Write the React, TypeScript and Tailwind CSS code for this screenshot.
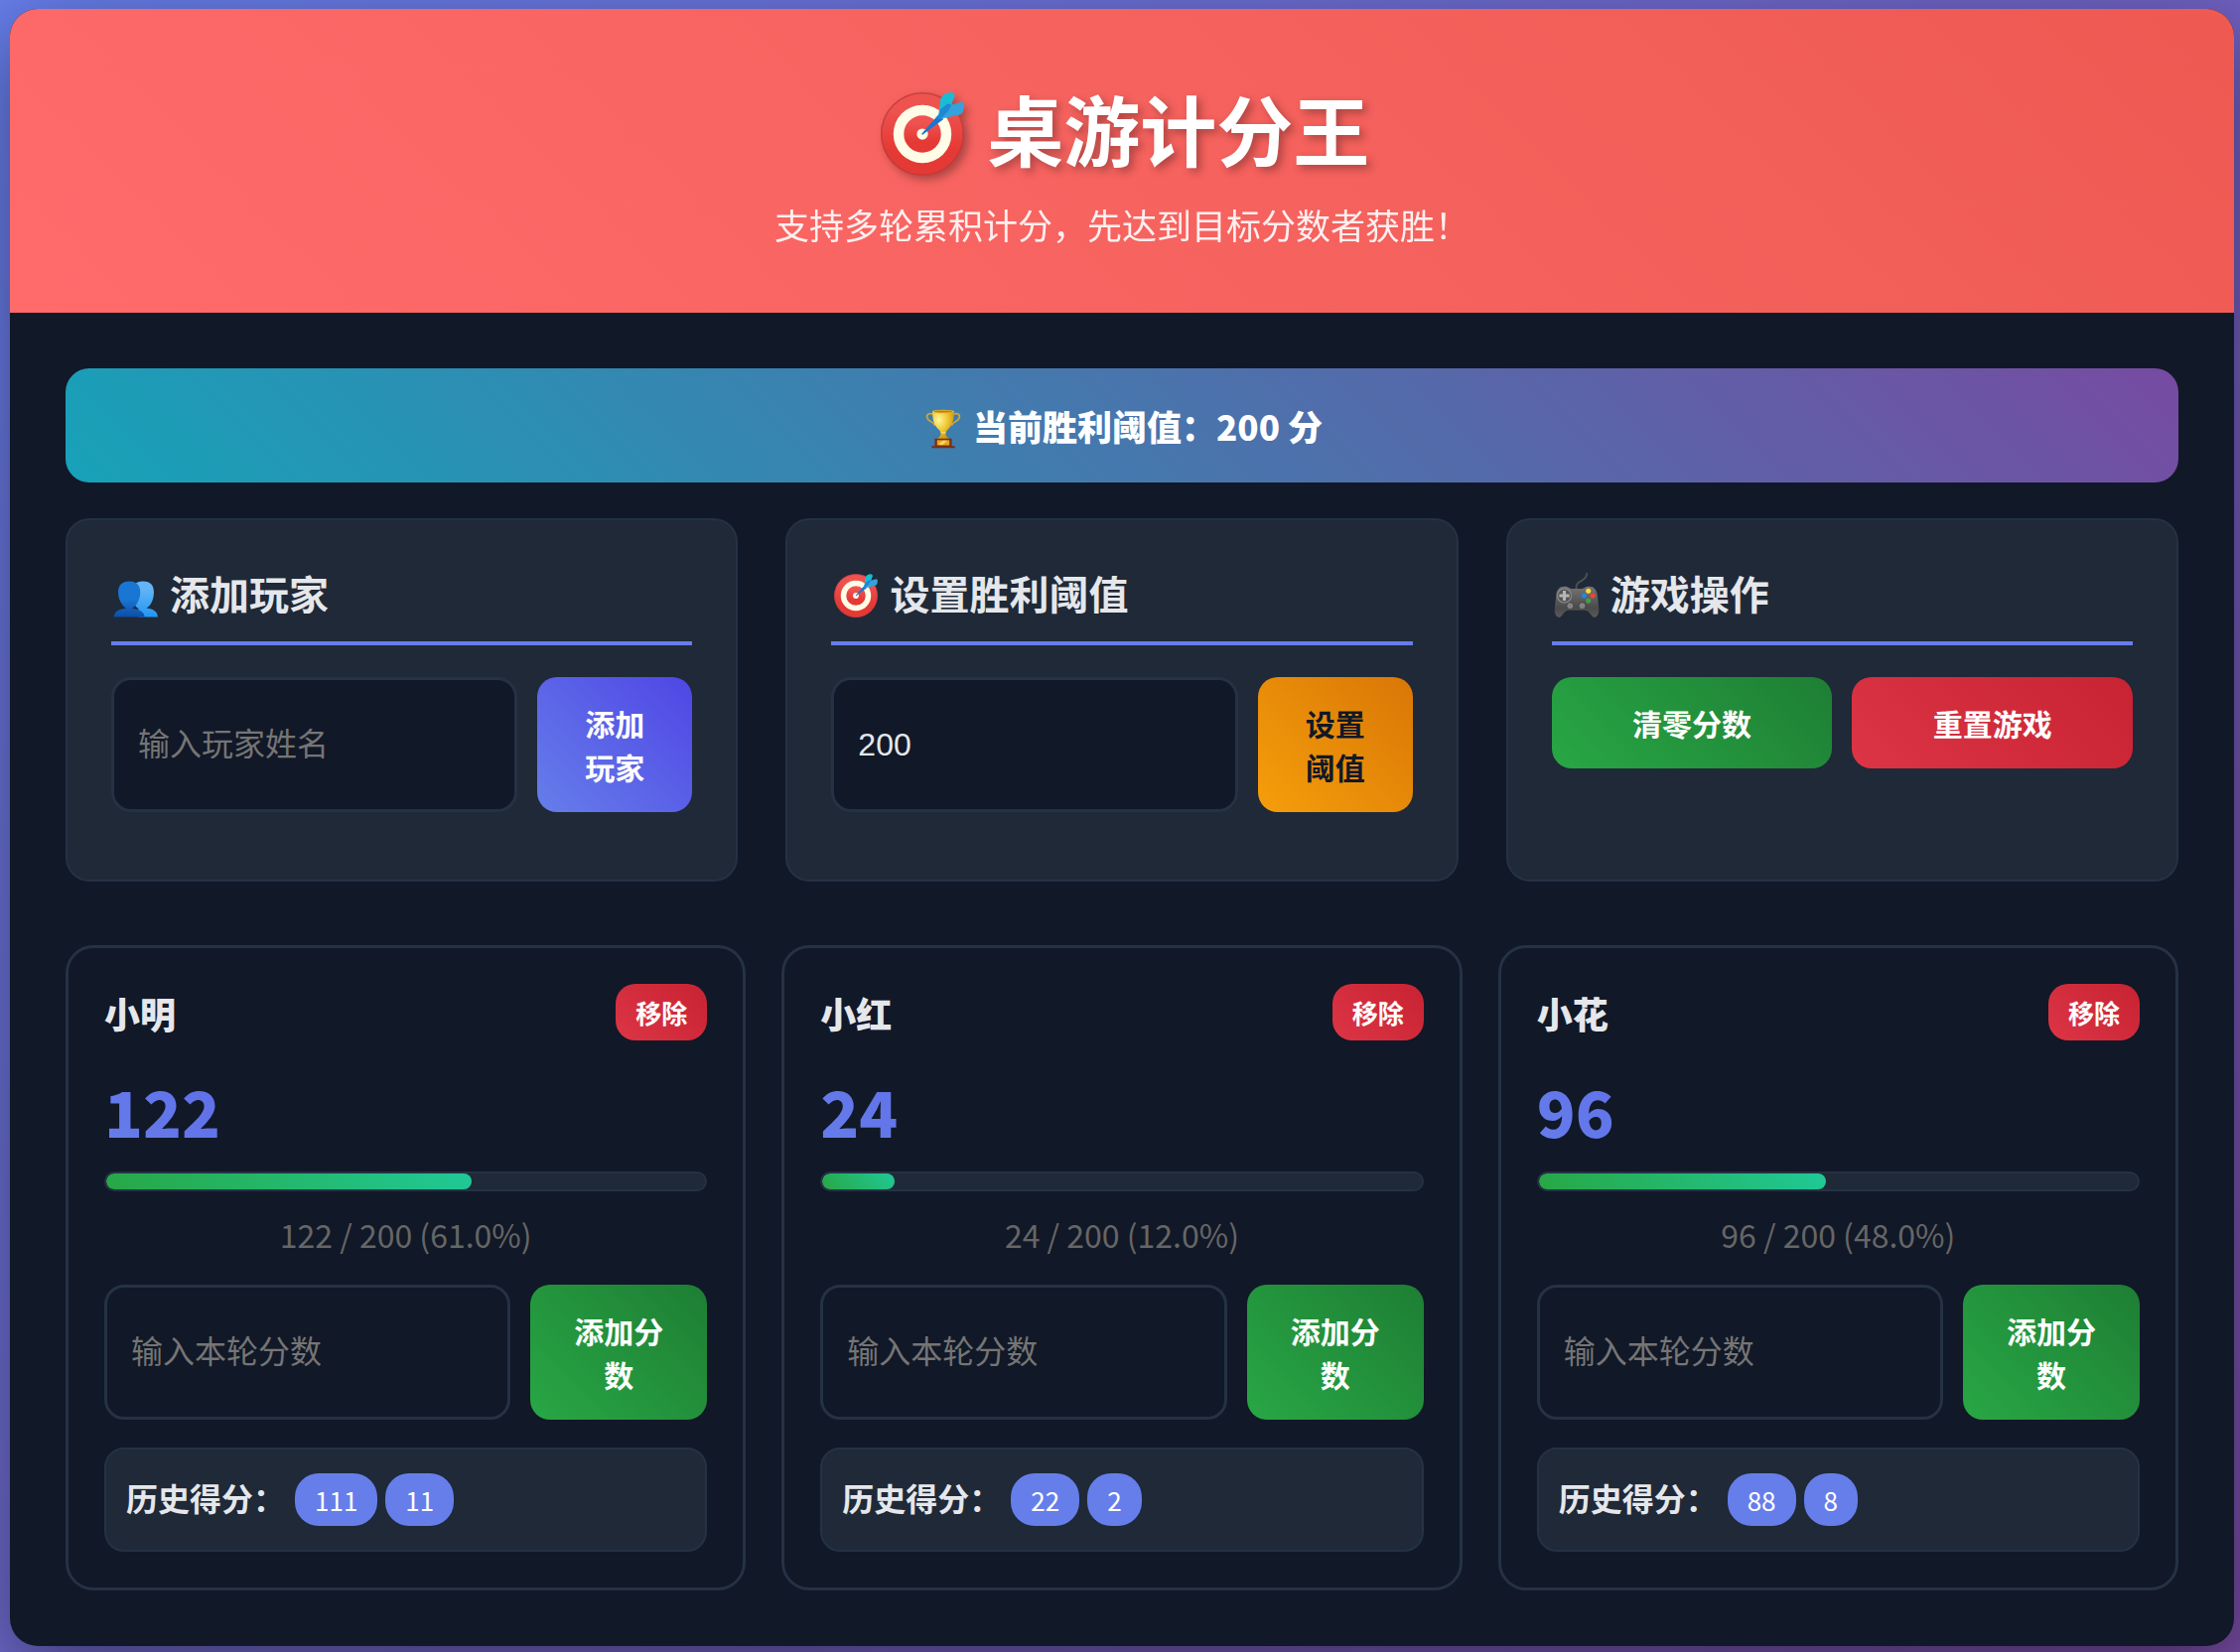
import { useState } from 'react';

interface Player {
  id: number;
  name: string;
  scores: number[];
}

const initialPlayers: Player[] = [
  { id: 1, name: '小明', scores: [111, 11] },
  { id: 2, name: '小红', scores: [22, 2] },
  { id: 3, name: '小花', scores: [88, 8] },
];

const sum = (scores: number[]) => scores.reduce((a, b) => a + b, 0);

const inputClass =
  'min-w-0 flex-1 rounded-[20px] border-3 border-[#243244] bg-[#111827] px-6 text-[32px] text-[#e5e7eb] placeholder:text-[#757575] outline-none font-["Liberation_Sans","Noto_Sans_CJK_SC",sans-serif]';

const buttonClass = 'rounded-[20px] px-10 py-6 text-[30px] leading-[44px] font-bold cursor-pointer';

const greenGradient = 'bg-[linear-gradient(45deg,#28a745,#1e7e34)] text-white';
const redGradient = 'bg-[linear-gradient(45deg,#dc3545,#c82333)] text-white';

const panelIconClass = 'inline-block size-[50px] align-[-11px]';

interface IconProps {
  className: string;
}

const TargetIcon = ({ className }: IconProps) => (
  <svg viewBox="0 0 128 128" className={className} aria-hidden="true">
    <defs>
      <linearGradient id="target-red" x1="0" y1="0" x2="0" y2="1">
        <stop offset="0.2" stopColor="#ef5350" />
        <stop offset="0.7" stopColor="#e53935" />
      </linearGradient>
    </defs>
    <circle cx="64" cy="64" r="56" fill="url(#target-red)" />
    <circle cx="64" cy="64" r="55" fill="none" stroke="#b73a38" strokeWidth="2" opacity="0.7" />
    <circle cx="64" cy="64" r="39" fill="#fffde7" />
    <circle cx="64" cy="64" r="25" fill="url(#target-red)" />
    <circle cx="64" cy="64" r="7.5" fill="#fffde7" />
    <path d="M64 64 86 39 91 44Z" fill="#1976d2" stroke="#1976d2" strokeWidth="2" strokeLinejoin="round" />
    <path d="M85 43 88 19Q90 11 97 9L103 8Q108 9 107 14L102 27 91 43Z" fill="#1abcd5" />
    <path d="M87 44 102 25 116 21Q120 21 120 25L119 33Q117 38 110 39Z" fill="#35a2dc" />
    <path d="M84 45 88 31 97 24Q103 22 102 27L98 34 88 44Z" fill="#1e88d2" />
  </svg>
);

const TrophyIcon = ({ className }: IconProps) => (
  <svg viewBox="0 0 128 128" className={className} aria-hidden="true">
    <defs>
      <radialGradient id="trophy-cup" cx="0.3" cy="0.3" r="0.8">
        <stop offset="0" stopColor="#fff59d" />
        <stop offset="0.5" stopColor="#f0c832" />
        <stop offset="1" stopColor="#c98a0c" />
      </radialGradient>
    </defs>
    <path
      d="M36 22C20 14 13 24 18 34 22 43 35 42 39 53M92 22C108 14 115 24 110 34 106 43 93 42 89 53"
      fill="none"
      stroke="#c9a53a"
      strokeWidth="5"
      strokeLinecap="round"
    />
    <path
      d="M32 13C33 37 37 53 49 64 57 71 58 77 56 83 54 88 49 90 47 93H81C79 90 74 88 72 83 70 77 71 71 79 64 91 53 95 37 96 13Z"
      fill="url(#trophy-cup)"
    />
    <ellipse cx="64" cy="13" rx="32" ry="5" fill="#e8bd35" />
    <ellipse cx="64" cy="13" rx="27" ry="3" fill="#b98218" />
    <ellipse cx="64" cy="75" rx="8" ry="3" fill="#f5d75a" />
    <path d="M39 92H89V114H98V120H30V114H39Z" fill="#7b2e14" />
    <path d="M46 97H82V112H46Z" fill="#e0ab25" />
    <path d="M50 109 63 98H75L62 111Z" fill="#ffe97a" opacity="0.7" />
  </svg>
);

const PlayersIcon = ({ className }: IconProps) => (
  <svg viewBox="0 0 128 128" className={className} aria-hidden="true">
    <defs>
      <linearGradient id="players-back" x1="0" y1="0" x2="0" y2="1">
        <stop offset="0.2" stopColor="#64b5f6" />
        <stop offset="1" stopColor="#2196f3" />
      </linearGradient>
      <linearGradient id="players-front" x1="0" y1="0" x2="0" y2="1">
        <stop offset="0.5" stopColor="#1976d2" />
        <stop offset="1" stopColor="#0d4da6" />
      </linearGradient>
    </defs>
    <path
      d="M82 27C102 27 110 38 110 55 110 75 101 91 91 96 109 98 120 106 120 119H70V97C58 90 54 75 54 55 54 38 62 27 82 27Z"
      fill="url(#players-back)"
    />
    <path
      d="M47 27C66 27 75 38 75 55 75 77 63 91 54 97 74 98 86 107 86 119H7C7 106 18 98 39 97 30 91 18 77 18 55 18 38 27 27 47 27Z"
      fill="url(#players-front)"
    />
  </svg>
);

const GamepadIcon = ({ className }: IconProps) => (
  <svg viewBox="0 0 128 128" className={className} aria-hidden="true">
    <defs>
      <linearGradient id="pad-body" x1="0" y1="0" x2="0" y2="1">
        <stop offset="0" stopColor="#757575" />
        <stop offset="0.7" stopColor="#4a4a4a" />
        <stop offset="1" stopColor="#5a5a5a" />
      </linearGradient>
    </defs>
    <path d="M63 46C59 22 90 30 90 7" fill="none" stroke="#4b524f" strokeWidth="5" strokeLinecap="round" />
    <path
      d="M32 40C43 40 45 46 53 46H75C83 46 85 40 96 40 109 40 115 49 117 60L121 98C122 110 117 119 110 120 100 120 99 102 83 102H45C29 102 28 120 18 120 11 119 6 110 7 98L11 60C13 49 19 40 32 40Z"
      fill="url(#pad-body)"
    />
    <circle cx="32" cy="64" r="18" fill="#555555" stroke="#8a8a8a" strokeWidth="3" />
    <path d="M28 51H36V60H45V68H36V77H28V68H19V60H28Z" fill="#b5b5b5" />
    <circle cx="94" cy="52" r="6.5" fill="#fdd835" />
    <circle cx="83" cy="64" r="6.5" fill="#1e88e5" />
    <circle cx="105" cy="64" r="6.5" fill="#f44336" />
    <circle cx="94" cy="77" r="6.5" fill="#43a047" />
    <circle cx="47" cy="90" r="9" fill="#828282" stroke="#3a3a3a" strokeWidth="2" />
    <circle cx="78" cy="90" r="9" fill="#828282" stroke="#3a3a3a" strokeWidth="2" />
  </svg>
);

interface PanelProps {
  icon: React.ReactNode;
  title: string;
  children: React.ReactNode;
}

const Panel = ({ icon, title, children }: PanelProps) => (
  <section className="rounded-3xl border-2 border-[#243244] bg-[#1f2937] p-11 pb-17">
    <h2 className="mb-8 border-b-4 border-[#667eea] pb-5 text-[40px] leading-[58px] font-bold">
      {icon} {title}
    </h2>
    {children}
  </section>
);

interface PlayerCardProps {
  player: Player;
  threshold: number;
  onAdd: (id: number, score: number) => void;
  onRemove: (id: number) => void;
}

const PlayerCard = ({ player, threshold, onAdd, onRemove }: PlayerCardProps) => {
  const [value, setValue] = useState('');
  const total = sum(player.scores);
  const percent = Math.min((total / threshold) * 100, 100);

  const handleSubmit = (e: React.FormEvent) => {
    e.preventDefault();
    if (value === '' || Number.isNaN(Number(value))) return;
    onAdd(player.id, Number(value));
    setValue('');
  };

  return (
    <article className="rounded-[28px] border-3 border-[#243244] bg-[#111827] p-9">
      <div className="mb-6 flex items-center justify-between">
        <h3 className="text-4xl leading-[52px] font-black">{player.name}</h3>
        <button
          type="button"
          onClick={() => onRemove(player.id)}
          className={`rounded-[20px] px-5 py-2.5 text-[26px] leading-[37px] font-bold cursor-pointer ${redGradient}`}
        >
          移除
        </button>
      </div>

      <div className="mb-4 bg-[linear-gradient(45deg,#667eea,#4f46e5)] bg-clip-text text-[64px] leading-[92px] font-black text-transparent">
        {total}
      </div>

      <div className="h-5 overflow-hidden rounded-[10px] border-2 border-[#243244] bg-[#1f2937]">
        <div
          className="h-full rounded-[10px] bg-[linear-gradient(45deg,#28a745,#20c997)]"
          style={{ width: `${percent}%` }}
        />
      </div>
      <p className="mt-5 mb-7 text-center text-[32px] leading-[46px] text-[#666666]">
        {total} / {threshold} ({percent.toFixed(1)}%)
      </p>

      <form onSubmit={handleSubmit} className="mb-7 flex gap-5">
        <input
          type="text"
          inputMode="numeric"
          aria-label={`${player.name} 本轮分数`}
          placeholder="输入本轮分数"
          value={value}
          onChange={(e) => setValue(e.target.value)}
          className={inputClass}
        />
        <button type="submit" className={`w-[178px] ${buttonClass} ${greenGradient}`}>
          添加分数
        </button>
      </form>

      <div className="flex flex-wrap items-baseline rounded-[20px] border-2 border-[#243244] bg-[#1f2937] p-5">
        <strong className="mr-1.5 text-[32px] leading-[46px]">历史得分：</strong>
        {player.scores.map((score, i) => (
          <span
            key={i}
            className="m-1 rounded-3xl bg-[#667eea] px-5 py-2 text-[26px] leading-[37px] text-white"
          >
            {score}
          </span>
        ))}
      </div>
    </article>
  );
};

export default function App() {
  const [players, setPlayers] = useState(initialPlayers);
  const [name, setName] = useState('');
  const [threshold, setThreshold] = useState(200);
  const [thresholdInput, setThresholdInput] = useState('200');

  const addPlayer = (e: React.FormEvent) => {
    e.preventDefault();
    if (!name.trim()) return;
    setPlayers([...players, { id: Date.now(), name: name.trim(), scores: [] }]);
    setName('');
  };

  const applyThreshold = (e: React.FormEvent) => {
    e.preventDefault();
    const next = Number(thresholdInput);
    if (next > 0) setThreshold(next);
  };

  const addScore = (id: number, score: number) =>
    setPlayers(players.map((p) => (p.id === id ? { ...p, scores: [...p.scores, score] } : p)));

  const removePlayer = (id: number) => setPlayers(players.filter((p) => p.id !== id));

  return (
    <div className='min-h-screen bg-[linear-gradient(135deg,#667eea,#764ba2)] pt-[9px] pr-1.5 pb-1.5 pl-2.5 font-["Noto_Sans_CJK_SC",sans-serif] text-[#e5e7eb]'>
      <div className="overflow-hidden rounded-[28px] bg-[#111827] shadow-[0_24px_80px_rgba(0,0,0,0.45)]">
        <header className="bg-[linear-gradient(45deg,#ff6b6b,#ee5a52)] py-16 text-center text-white">
          <h1 className="mb-4 text-[77px] leading-[111px] font-bold [text-shadow:4px_4px_8px_rgba(0,0,0,0.3)]">
            <TargetIcon className="inline-block size-24 align-[-21px] drop-shadow-[4px_4px_4px_rgba(0,0,0,0.3)]" />{' '}
            桌游计分王
          </h1>
          <p className="text-[35px] leading-[51px] opacity-90">支持多轮累积计分，先达到目标分数者获胜！</p>
        </header>

        <main className="p-14">
          <div className="mb-9 rounded-3xl bg-[linear-gradient(45deg,#17a2b8,#764ba2)] py-8 text-center text-[35px] leading-[51px] font-black text-white">
            <TrophyIcon className="inline-block size-11 align-[-10px]" /> 当前胜利阈值：{threshold} 分
          </div>

          <div className="mb-16 grid grid-cols-3 gap-12">
            <Panel icon={<PlayersIcon className={panelIconClass} />} title="添加玩家">
              <form onSubmit={addPlayer} className="flex gap-5">
                <input
                  type="text"
                  aria-label="玩家姓名"
                  placeholder="输入玩家姓名"
                  value={name}
                  onChange={(e) => setName(e.target.value)}
                  className={inputClass}
                />
                <button
                  type="submit"
                  className={`w-[156px] ${buttonClass} bg-[linear-gradient(45deg,#667eea,#4f46e5)] text-white`}
                >
                  添加玩家
                </button>
              </form>
            </Panel>

            <Panel icon={<TargetIcon className={panelIconClass} />} title="设置胜利阈值">
              <form onSubmit={applyThreshold} className="flex gap-5">
                <input
                  type="text"
                  inputMode="numeric"
                  aria-label="胜利阈值"
                  value={thresholdInput}
                  onChange={(e) => setThresholdInput(e.target.value)}
                  className={inputClass}
                />
                <button
                  type="submit"
                  className={`w-[156px] ${buttonClass} bg-[linear-gradient(45deg,#f59e0b,#d97706)] text-[#111827]`}
                >
                  设置阈值
                </button>
              </form>
            </Panel>

            <Panel icon={<GamepadIcon className={panelIconClass} />} title="游戏操作">
              <div className="flex gap-5">
                <button
                  type="button"
                  onClick={() => setPlayers(players.map((p) => ({ ...p, scores: [] })))}
                  className={`flex-1 ${buttonClass} ${greenGradient}`}
                >
                  清零分数
                </button>
                <button
                  type="button"
                  onClick={() => setPlayers([])}
                  className={`flex-1 ${buttonClass} ${redGradient}`}
                >
                  重置游戏
                </button>
              </div>
            </Panel>
          </div>

          <div className="grid grid-cols-3 gap-9">
            {players.map((player) => (
              <PlayerCard
                key={player.id}
                player={player}
                threshold={threshold}
                onAdd={addScore}
                onRemove={removePlayer}
              />
            ))}
          </div>
        </main>
      </div>
    </div>
  );
}
